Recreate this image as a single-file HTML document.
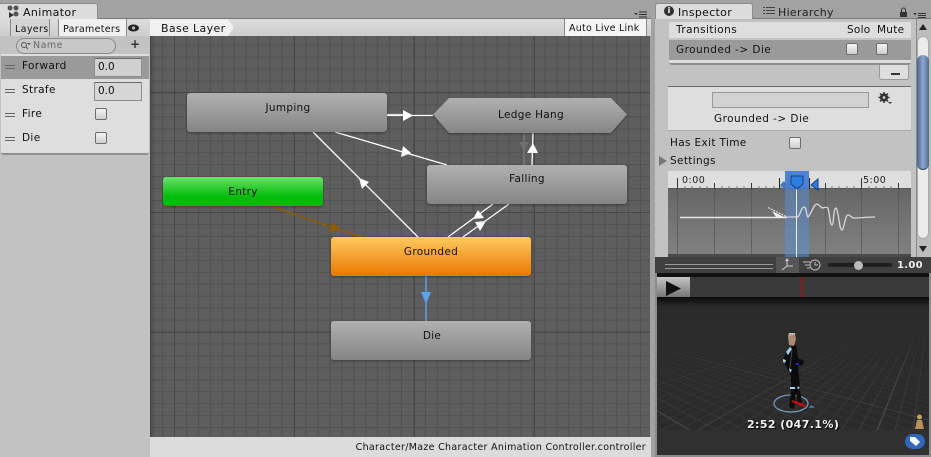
<!DOCTYPE html>
<html><head><meta charset="utf-8"><style>
html,body{margin:0;padding:0;width:931px;height:457px;overflow:hidden;background:#a2a2a2}
body{position:relative;font-family:"DejaVu Sans","Liberation Sans",sans-serif;font-size:10.5px;color:#111}
.a{position:absolute}.t{position:absolute;white-space:nowrap;line-height:13px}
.cb{position:absolute;width:10px;height:10px;border:1px solid #6e6e6e;border-radius:2px;background:linear-gradient(#f4f4f4,#cfcfcf)}
.f{position:absolute;background:#cfcfcf;border:1px solid #8e8e8e;border-top-color:#6b6b6b;box-sizing:border-box;padding-left:3px;line-height:17px}
.h{position:absolute;left:5px;width:10px;border-bottom:1px solid #666;border-top:1px solid #666;height:2px}
</style></head><body>
<!-- left tab -->
<div class="a" style="left:0;top:3px;width:98px;height:16px;background:#dcdcdc;border-radius:0 3px 0 0;border:1px solid #8c8c8c;border-left:0;border-bottom:0;box-sizing:border-box"></div>
<div class="a" style="left:98px;top:18px;width:553px;height:1px;background:#7a7a7a"></div>
<svg class="a" style="left:7px;top:5px" width="14" height="14"><circle cx="3" cy="3" r="2.500" fill="#555"/><circle cx="9" cy="3" r="2.500" fill="#555"/><circle cx="9" cy="9" r="2.500" fill="#555"/><path d="M2 7l5 3-5 3z" fill="#333"/></svg>
<div class="t" style="left:23px;top:6px;font-size:11px;letter-spacing:.35px">Animator</div>
<!-- toolbar -->
<div class="a" style="left:0;top:19px;width:651px;height:17px;background:linear-gradient(#dcdcdc,#cdcdcd)"></div>
<div class="a" style="left:10px;top:19px;width:40px;height:17px;background:#d4d4d4;border-left:1px solid #888;border-right:1px solid #888;box-sizing:border-box"></div>
<div class="a" style="left:58px;top:19px;width:69px;height:17px;background:#f0f0f0;border-left:1px solid #888;border-right:1px solid #888;box-sizing:border-box"></div>
<div class="t" style="left:15px;top:23px;font-size:9.500px;letter-spacing:.35px">Layers</div>
<div class="t" style="left:63px;top:23px;font-size:9.500px;letter-spacing:.3px">Parameters</div>
<svg class="a" style="left:127px;top:23px" width="14" height="11"><ellipse cx="6.500" cy="5" rx="5.500" ry="3.500" fill="#222"/><circle cx="6.500" cy="5" r="1.600" fill="#bbb"/></svg>
<div class="a" style="left:150px;top:19px;width:84px;height:17px;background:#f0f0f0;clip-path:polygon(0 0,78px 0,84px 50%,78px 100%,0 100%)"></div>
<div class="t" style="left:161px;top:22px;font-size:11px;letter-spacing:.35px">Base Layer</div>
<div class="a" style="left:564px;top:19px;width:83px;height:17px;background:#f4f4f4;border-left:1px solid #888;border-right:1px solid #888;box-sizing:border-box"></div>
<div class="t" style="left:569px;top:22px;font-size:9.500px;letter-spacing:.25px">Auto Live Link</div>
<svg class="a" style="left:634px;top:11px" width="14" height="7"><path d="M0 2l2 2 2-2z" fill="#333"/><path d="M5 1h8M5 3.500h8M5 6h8" stroke="#333"/></svg>
<!-- left panel -->
<div class="a" style="left:0;top:36px;width:150px;height:421px;background:#c2c2c2"></div>
<div class="a" style="left:16px;top:38px;width:98px;height:14px;border:1px solid #8a8a8a;border-radius:8px;background:#c8c8c8"></div>
<svg class="a" style="left:20px;top:41px" width="11" height="9"><circle cx="4" cy="4" r="2.500" stroke="#555" fill="none"/><path d="M6 6l2 2" stroke="#555"/><path d="M7 2h4l-2 2z" fill="#555"/></svg>
<div class="t" style="left:33px;top:39px;font-size:9.500px;color:#666;letter-spacing:.5px">Name</div>
<div class="t" style="left:130px;top:38px;font-size:12px;font-weight:bold;color:#333">+</div>
<div class="a" style="left:1px;top:54px;width:148px;height:101px;background:#dedede;border-bottom:2px solid #8e8e8e;border-radius:0 0 3px 3px;box-sizing:border-box"></div>
<div class="a" style="left:1px;top:56px;width:148px;height:23px;background:#9a9a9a"></div>
<div class="h" style="top:65px"></div><div class="t" style="left:22px;top:60px;letter-spacing:.35px">Forward</div>
<div class="f" style="left:94px;top:58px;width:48px;height:19px;background:#d0d0d0">0.0</div>
<div class="h" style="top:89px"></div><div class="t" style="left:22px;top:84px;letter-spacing:.35px">Strafe</div>
<div class="f" style="left:94px;top:82px;width:48px;height:19px;background:#d6d6d6">0.0</div>
<div class="h" style="top:113px"></div><div class="t" style="left:22px;top:108px;letter-spacing:.35px">Fire</div><div class="cb" style="left:95px;top:108px"></div>
<div class="h" style="top:137px"></div><div class="t" style="left:22px;top:132px;letter-spacing:.35px">Die</div><div class="cb" style="left:95px;top:132px"></div>
<!-- graph -->
<svg class="a" style="left:150px;top:36px" width="500" height="401" viewBox="150 36 500 401">
<defs>
<pattern id="mn" x="174" y="212" width="11.950" height="11.950" patternUnits="userSpaceOnUse"><path d="M.5 0V11.950M0 .5H11.950" stroke="#515151" stroke-width="1" fill="none"/></pattern>
<linearGradient id="gg" x1="0" y1="0" x2="0" y2="1"><stop offset="0" stop-color="#b0b0b0"/><stop offset="1" stop-color="#858585"/></linearGradient>
<linearGradient id="go" x1="0" y1="0" x2="0" y2="1"><stop offset="0" stop-color="#ffc95e"/><stop offset="1" stop-color="#e87800"/></linearGradient>
<linearGradient id="gr" x1="0" y1="0" x2="0" y2="1"><stop offset="0" stop-color="#6ae26a"/><stop offset=".65" stop-color="#06bd0c"/><stop offset="1" stop-color="#06b80a"/></linearGradient>
</defs>
<rect x="150" y="36" width="500" height="401" fill="#5e5e5e"/>
<rect x="150" y="36" width="500" height="401" fill="url(#mn)"/>
<path d="M174.500 36V437M294.500 36V437M414.500 36V437M534.500 36V437M150 92.500H650M150 212.500H650M150 332.500H650" stroke="#484848" fill="none"/>
<g stroke="#fff" stroke-width="1.300" fill="none">
<path d="M387 115.500H433"/><path d="M387 114.500H405" stroke="#ddd"/><path d="M335 132L447 165"/><path d="M313 132L418 237"/>
<path d="M448 237L493 204"/><path d="M463 237L509 204"/><path d="M533 133L532 165"/>
</g>
<path d="M524 133V165" stroke="#777" stroke-width="1.500"/>
<g fill="#fff">
<path d="M403 110L413 115.500L403 121z"/><path d="M403 146L401 157L411 153z"/><path d="M359 178L369 182L362 189z"/>
<path d="M478 210L473 219L484 218z"/><path d="M475 222L486 221L480 231z"/><path d="M533 143L527 153H538z"/>
</g>
<path d="M519 142H529L524 151z" fill="#6f6f6f"/>
<path d="M270 206L361 237" stroke="#8c5c00" stroke-width="1.500" fill="none"/>
<path d="M333 222L341 230L329 232z" fill="#8c5c00"/>
<path d="M426 276V321" stroke="#5ba3ee" stroke-width="1.500"/><path d="M421 292H431L426 304z" fill="#5ba3ee"/>
<g style="filter:drop-shadow(0 1px 1px rgba(0,0,0,.35))">
<rect x="187" y="93" width="200" height="39" rx="3" fill="url(#gg)"/>
<path d="M449 98H611L627 114.500L611 133H449L433 114.500z" fill="url(#gg)"/>
<rect x="427" y="165" width="200" height="39" rx="3" fill="url(#gg)"/>
<rect x="163" y="177" width="160" height="29" rx="3" fill="url(#gr)"/>
<rect x="331" y="237" width="200" height="39" rx="3" fill="url(#go)"/>
<rect x="331" y="321" width="200" height="39" rx="3" fill="url(#gg)"/>
</g>
<g font-family="DejaVu Sans,Liberation Sans,sans-serif" font-size="10.500" fill="#111" text-anchor="middle" letter-spacing=".3">
<text x="288" y="111">Jumping</text><text x="531" y="118">Ledge Hang</text><text x="527" y="182">Falling</text>
<text x="243" y="195">Entry</text><text x="431" y="255">Grounded</text><text x="432" y="339">Die</text>
</g>
</svg>
<div class="a" style="left:150px;top:36px;width:6px;height:401px;background:linear-gradient(90deg,rgba(0,0,0,.18),transparent)"></div>
<div class="a" style="left:150px;top:437px;width:501px;height:20px;background:#dcdcdc"></div>
<div class="t" style="right:285px;top:441px;font-size:9.500px;letter-spacing:.3px">Character/Maze Character Animation Controller.controller</div>
<div class="a" style="left:651px;top:0;width:4px;height:457px;background:#a2a2a2"></div>
<!-- inspector -->
<div class="a" style="left:655px;top:3px;width:98px;height:16px;background:#dcdcdc;border-radius:3px 3px 0 0;border:1px solid #8c8c8c;border-bottom:0;box-sizing:border-box"></div>
<div class="a" style="left:753px;top:18px;width:178px;height:1px;background:#7a7a7a"></div>
<div class="a" style="left:664px;top:6px;width:10px;height:10px;border-radius:50%;background:#333;color:#fff;font-size:8px;line-height:10px;text-align:center;font-weight:bold">i</div>
<div class="t" style="left:678px;top:6px;font-size:11px;letter-spacing:.3px">Inspector</div>
<svg class="a" style="left:763px;top:6px" width="13" height="9"><path d="M3 1.500H12M3 4.500H12M3 7.500H12M0 1.500H2M0 4.500H2M0 7.500H2" stroke="#444"/></svg>
<div class="t" style="left:778px;top:6px;font-size:11px;letter-spacing:.3px;color:#222">Hierarchy</div>
<svg class="a" style="left:899px;top:7px" width="32" height="11"><path d="M1 5h7v5H1z" fill="#333"/><path d="M2.500 5V3a2 2 0 0 1 4 0V5" stroke="#333" fill="none"/><path d="M14 6l2 2 2-2z" fill="#333"/><path d="M19 6.500h8M19 8.500h8M19 10.500h8" stroke="#333"/></svg>
<div class="a" style="left:655px;top:19px;width:261px;height:238px;background:#c2c2c2"></div>
<!-- transitions -->
<div class="a" style="left:669px;top:22px;width:242px;height:43px;background:#dedede;border-radius:0 0 3px 3px;border-bottom:2px solid #8e8e8e;box-sizing:border-box"></div>
<div class="a" style="left:669px;top:38px;width:242px;height:2px;background:#c4c4c4"></div>
<div class="a" style="left:669px;top:40px;width:242px;height:20px;background:#9a9a9a"></div>
<div class="t" style="left:676px;top:24px;letter-spacing:.45px">Transitions</div>
<div class="t" style="left:847px;top:24px;letter-spacing:.25px">Solo</div>
<div class="t" style="left:877px;top:24px;letter-spacing:.25px">Mute</div>
<div class="t" style="left:676px;top:44px;letter-spacing:.45px">Grounded -&gt; Die</div>
<div class="cb" style="left:846px;top:43px"></div><div class="cb" style="left:876px;top:43px"></div>
<div class="a" style="left:879px;top:65px;width:30px;height:15px;background:#dedede;border:1px solid #999;border-top:0;border-radius:0 0 3px 3px;box-sizing:border-box"></div>
<div class="a" style="left:891px;top:73px;width:9px;height:2px;background:#333"></div>
<!-- name header -->
<div class="a" style="left:668px;top:86px;width:243px;height:45px;background:#dedede;border-top:1px solid #6a6a6a;border-bottom:1px solid #aaa;box-sizing:border-box"></div>
<div class="a" style="left:712px;top:92px;width:157px;height:16px;background:#d2d2d2;border:1px solid #999;box-sizing:border-box"></div>
<div class="t" style="left:714px;top:113px;letter-spacing:.45px">Grounded -&gt; Die</div>
<svg class="a" style="left:878px;top:92px" width="14" height="13"><circle cx="6" cy="5.500" r="3" fill="none" stroke="#333" stroke-width="2.200"/><path d="M6 0V11M.5 5.500H11.500M2 1.500L10 9.500M10 1.500L2 9.500" stroke="#333" stroke-width="1.500"/><circle cx="6" cy="5.500" r="1.300" fill="#dedede"/><path d="M10 10h4l-2 2z" fill="#333"/></svg>
<div class="t" style="left:670px;top:137px;letter-spacing:.35px">Has Exit Time</div>
<div class="cb" style="left:789px;top:137px"></div>
<svg class="a" style="left:659px;top:156px" width="9" height="10"><path d="M0 0L8 5L0 10z" fill="#777"/></svg>
<div class="t" style="left:670px;top:155px;letter-spacing:.35px">Settings</div>
<!-- scrollbar -->
<div class="a" style="left:916px;top:19px;width:15px;height:238px;background:#bcbcbc;border-left:1px solid #8a8a8a;box-sizing:border-box"></div>
<svg class="a" style="left:918px;top:24px" width="10" height="8"><path d="M5 0L9 6H1z" fill="#222"/></svg>
<svg class="a" style="left:918px;top:246px" width="10" height="8"><path d="M5 6L9 0H1z" fill="#222"/></svg>
<div class="a" style="left:917px;top:36px;width:12px;height:203px;background:#ececec;border-radius:6px;border:1px solid #aaa;box-sizing:border-box"></div>
<div class="a" style="left:917px;top:55px;width:12px;height:115px;background:linear-gradient(90deg,#48648f,#90a7cc 50%,#4f6b96);border-radius:6px;border-bottom:1px solid #2f4468;box-sizing:border-box"></div>
<!-- timeline -->
<div class="a" style="left:668px;top:171px;width:243px;height:18px;background:#dedede"></div>
<div class="a" style="left:668px;top:188px;width:243px;height:1px;background:#555"></div>
<div class="a" style="left:668px;top:189px;width:243px;height:65px;background:linear-gradient(#666,#797979 70%,#808080)"></div>
<div class="a" style="left:668px;top:254px;width:243px;height:3px;background:#4a4a4a"></div>
<svg class="a" style="left:668px;top:171px" width="243" height="86">
<g stroke="#333" fill="none">
<path d="M9.500 7V18M46.500 12V18M83.500 12V18M120.500 7V18M157.500 12V18M193.500 7V18M230.500 12V18"/>
<path d="M17 15V18M24 15V18M32 15V18M39 15V18M54 15V18M61 15V18M69 15V18M76 15V18M91 15V18M98 15V18M106 15V18M113 15V18M128 15V18M135 15V18M143 15V18M150 15V18M164 15V18M171 15V18M179 15V18M186 15V18M201 15V18M208 15V18M216 15V18M223 15V18" stroke="#777"/></g>
<g stroke="#555" opacity=".7"><path d="M9.500 18V83M46.500 18V83M83.500 18V83M157.500 18V83M193.500 18V83M230.500 18V83"/></g>
<path d="M0 46.500H243" stroke="#6e6e6e"/>
<rect x="117" y="0" width="24" height="86" fill="#5a8fd8" opacity=".5"/>
<rect x="117" y="0" width="24" height="18" fill="#3f7ad6" opacity=".85"/>
<path d="M12 46.500H119" stroke="#e6e6e6" stroke-width="1.500" fill="none"/>
<path d="M100 36.500L119 46" stroke="#eee" stroke-dasharray="2 1" fill="none"/>
<path d="M104 40L118 47L108 46z" fill="#eee"/>
<path d="M119 46H129C132 46 133 36 136 36C139 36 138 45 140 46C143 43 146 33 149 33C152 34 153 37 155 37C157 36 158 36 160 37C162 45 162 54 164 54C166 54 165 37 168 37C171 40 171 59 174 59C176 59 177 44 180 44C183 44 183 47 186 47C192 47 200 46 207 46" stroke="#d8d8d8" stroke-width="1.300" fill="none"/>
<path d="M128.500 18V86" stroke="#eee"/>
<path d="M123 5H135V13L129 18L123 13z" fill="#2e7de0" stroke="#123e7e"/>
<path d="M112 14L116 10L119 14L116 18z" fill="#4a78b8"/>
<path d="M143 14L150 8V19z" fill="#2e7de0" stroke="#123e7e"/>
<path d="M111.500 7V18M141.500 7V18" stroke="#222"/>
<g fill="#222" font-family="DejaVu Sans,sans-serif" font-size="9.500" letter-spacing=".5"><text x="14" y="12">0:00</text><text x="195" y="12">5:00</text></g>
</svg>
<!-- toolbar of preview -->
<div class="a" style="left:655px;top:257px;width:276px;height:16px;background:#3f3f3f"></div>
<div class="a" style="left:665px;top:264px;width:108px;height:3px;border-top:1px solid #999;border-bottom:1px solid #999"></div>
<div class="a" style="left:776px;top:257px;width:23px;height:16px;background:#555"></div>
<svg class="a" style="left:778px;top:257px" width="70" height="16"><path d="M9 3V9L4 13M9 9H15" stroke="#ccc" fill="none"/><path d="M9 1L7 4H11z" fill="#ccc"/><path d="M25 5h7M27 8h5M29 11h3" stroke="#bbb"/><circle cx="37" cy="8" r="5" stroke="#bbb" fill="none"/><path d="M37 5V8H40" stroke="#bbb" fill="none"/></svg>
<div class="a" style="left:828px;top:263px;width:64px;height:4px;background:#1f1f1f;border-radius:2px"></div>
<div class="a" style="left:854px;top:261px;width:9px;height:9px;border-radius:50%;background:#bbb"></div>
<div class="t" style="left:897px;top:259px;font-weight:bold;font-size:10px;color:#eee;letter-spacing:.3px">1.00</div>
<!-- preview -->
<div class="a" style="left:655px;top:273px;width:276px;height:184px;background:#303030;border-left:2px solid #8c8c8c;border-right:2px solid #8c8c8c;border-bottom:2px solid #8c8c8c;box-sizing:border-box"></div>
<div class="a" style="left:657px;top:273px;width:272px;height:4px;background:#111"></div>
<div class="a" style="left:657px;top:277px;width:272px;height:20px;background:#3a3a3a"></div>
<div class="a" style="left:657px;top:277px;width:33px;height:20px;background:linear-gradient(#c4c4c4,#777)"></div>
<svg class="a" style="left:665px;top:281px" width="17" height="15"><path d="M1 0L16 7.500L1 15z" fill="#111"/></svg>
<div class="a" style="left:801px;top:277px;width:2px;height:20px;background:#8c1a1a"></div>
<!-- perspective ground -->
<div class="a" style="left:657px;top:297px;width:272px;height:133px;overflow:hidden;background:#2b2b2b;perspective:200px;perspective-origin:136px 68px">
<div class="a" style="left:-865px;top:-894px;width:2000px;height:2000px;transform:rotateX(71.200deg) rotateZ(33deg);background-image:linear-gradient(#4a4a4a 1px,transparent 1px),linear-gradient(90deg,#4a4a4a 1px,transparent 1px),linear-gradient(#383838 1px,transparent 1px),linear-gradient(90deg,#383838 1px,transparent 1px);background-size:120px 120px,120px 120px,12px 12px,12px 12px"></div>
<div class="a" style="left:0;top:0;width:272px;height:70px;background:linear-gradient(#0a0a0a,#2b2b2b 14%,rgba(43,43,43,.75) 45%,rgba(43,43,43,0))"></div>
</div>
<svg class="a" style="left:657px;top:297px" width="272" height="133" viewBox="657 297 272 133">
<ellipse cx="791" cy="403.500" rx="17" ry="8.500" fill="none" stroke="#7795b8" stroke-width="1.300"/>
<path d="M811 405L815 407.500L809 408z" fill="#4a78b8"/>
<path d="M792 347L786 352L783 360L788 370L791 376L791 392L789 407L794 409L796 392L798 403L802 402L800 390L799 376L798 366L803 365L804 361L798 358L797 350L796 345H790z" fill="#0b0b0b"/>
<path d="M789 345L788 336L791 333L795 334L796 339L794 346z" fill="#ad8a72"/>
<path d="M788 337L789 333H795V335H790z" fill="#b8b8b8"/>
<path d="M786 352L790 347L792 349L788 355zM783 359L786 360L785 363L783 362zM789 368L792 370L790 373zM790 387H795V389H790zM798 386L800 388L797 389z" fill="#a8d0f0"/>
<path d="M792 350L790 368" stroke="#444" stroke-width="1"/>
<rect x="796" y="363" width="3" height="2" fill="#22d"/>
<path d="M792 401L805 406" stroke="#e00" stroke-width="2"/>
</svg>
<div class="t" style="left:747px;top:418px;font-size:11px;font-weight:bold;color:#f2f2f2;letter-spacing:.4px;text-shadow:1px 1px 1px #000">2:52 (047.1%)</div>
<svg class="a" style="left:914px;top:414px" width="12" height="16"><circle cx="5.500" cy="3" r="2.500" fill="#c4a066"/><path d="M3 6H8L9 11L10 15H1L2 11z" fill="#b8915a"/></svg>
<div class="a" style="left:905px;top:434px;width:20px;height:15px;border-radius:8px;background:#3067b8"></div>
<svg class="a" style="left:909px;top:436px" width="12" height="11"><path d="M1 1H6L11 6L7 10L1 5z" fill="#fff"/></svg>
</body></html>
